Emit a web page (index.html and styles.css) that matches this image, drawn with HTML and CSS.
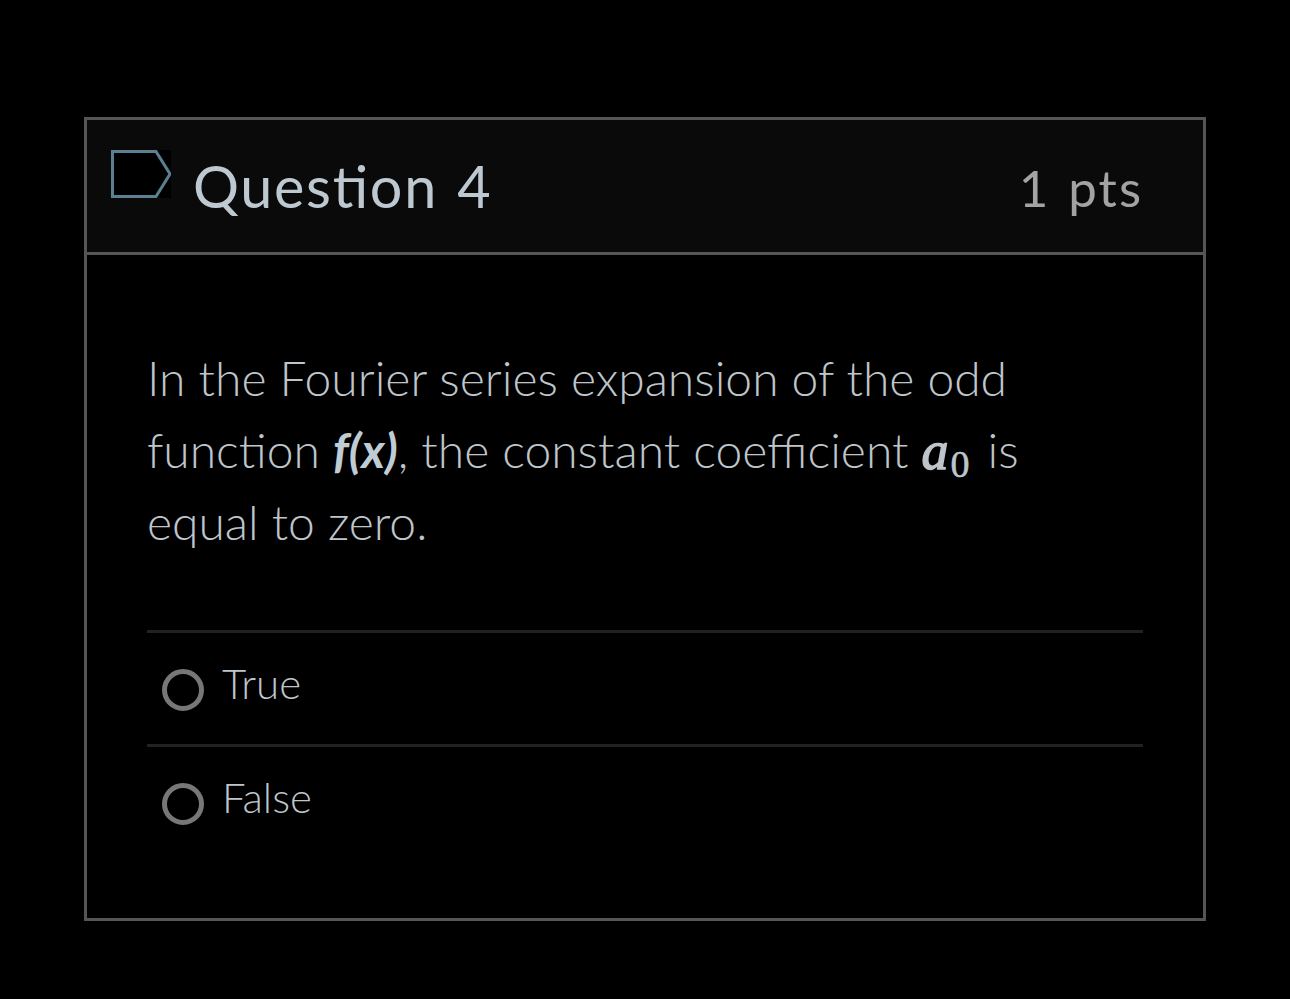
FILE: index.html
```
<!DOCTYPE html>
<html lang="en">
<head>
    <meta charset="UTF-8">
    <meta name="viewport" content="width=device-width, initial-scale=1.0">
    <title>Question 4</title>
    <link rel="stylesheet" href="styles.css">
</head>
<body>

<div class="question">
    <div class="header">
        <svg class="flag" width="60" height="48" viewBox="0 0 60 48">
            <rect width="60" height="48" fill="#000"/>
            <path d="M1.5 1.5H45L59 24L45 46.5H1.5Z" fill="none" stroke="#5a8092" stroke-width="3"/>
        </svg>
        <h2 class="name">Question 4</h2>
        <span class="points">1 pts</span>
    </div>

    <div class="text">
        <p class="prompt">
            In the Fourier series expansion of the odd<br>
            function <strong><em>f(x)</em></strong>, the constant coefficient <span class="math">a<sub>0</sub></span> is<br>
            equal to zero.
        </p>

        <div class="answers">
            <label class="answer">
                <input type="radio" name="answer">
                <span>True</span>
            </label>
            <label class="answer">
                <input type="radio" name="answer">
                <span>False</span>
            </label>
        </div>
    </div>
</div>

</body>
</html>
```
FILE: styles.css
```
body {
    margin: 0;
    padding: 117px 84px 0;
    background-color: #000;
    color: #bec5cb;
    font-family: Lato, sans-serif;
    font-feature-settings: "liga" 1;
}
.question {
    box-sizing: border-box;
    height: 804px;
    border: 3px solid #555;
}
.header {
    display: flex;
    align-items: flex-start;
    height: 132px;
    padding: 0 60px 0 24px;
    background-color: #0a0a0a;
    border-bottom: 3px solid #555;
}
.flag {
    margin-top: 30px;
}
.name {
    flex: 1;
    margin: 31px 0 0 22px;
    font-size: 57.5px;
    font-weight: 400;
    line-height: 70px;
    letter-spacing: 1.7px;
    word-spacing: 3px;
    color: #bdc8d0;
}
.points {
    margin-top: 33px;
    font-size: 51px;
    line-height: 70px;
    letter-spacing: 2px;
    word-spacing: 3px;
    color: #a3a3a3;
}
.text {
    padding: 87px 60px 0;
}
.prompt {
    margin: 0;
    font-size: 48px;
    font-weight: 300;
    line-height: 72px;
    white-space: nowrap;
}
.prompt strong {
    font-weight: 700;
    color: #c0ccd4;
}
.math {
    margin-right: 5px;
    font-family: "Liberation Serif", serif;
    font-size: 54px;
    font-style: italic;
    font-weight: 400;
    line-height: 0;
    vertical-align: -1px;
    -webkit-text-stroke: 1.4px;
}
.math sub {
    margin-left: 2px;
    font-size: 38px;
    font-style: normal;
    vertical-align: -8px;
    -webkit-text-stroke: 0.6px;
}
.answers {
    margin-top: 72px;
}
.answer {
    display: flex;
    height: 111px;
    padding-left: 15px;
    border-top: 3px solid #222;
    font-size: 42px;
    font-weight: 300;
    line-height: 50px;
}
.answer span {
    margin: 25px 0 0 18px;
}
.answer input {
    appearance: none;
    box-sizing: border-box;
    width: 42px;
    height: 42px;
    margin: 36px 0 0;
    border: 5px solid #777;
    border-radius: 50%;
}
```
